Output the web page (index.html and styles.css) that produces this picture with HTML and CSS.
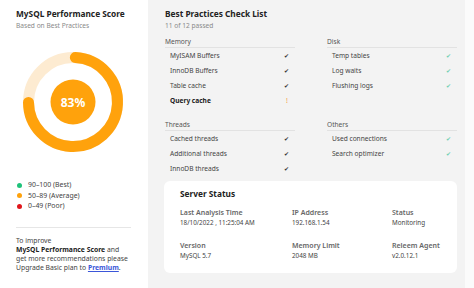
FILE: index.html
```html
<!DOCTYPE html>
<html lang="en">
<head>
    <meta charset="UTF-8">
    <meta name="viewport" content="width=device-width, initial-scale=1.0">
    <title>MySQL Performance</title>
    <link rel="stylesheet" href="styles.css">
</head>
<body>
    <div class="page">
        <div class="score-panel">
            <h1>MySQL Performance Score</h1>
            <p class="subtitle">Based on Best Practices</p>

            <svg class="donut" width="110" height="110" viewBox="0 0 110 110">
                <circle cx="55" cy="55" r="44.5" fill="none" stroke="#fdebd1" stroke-width="11"/>
                <circle cx="55" cy="55" r="44.5" fill="none" stroke="#ffa20c" stroke-width="11"
                        stroke-linecap="round" stroke-dasharray="206.6 300" transform="rotate(-87 55 55)"/>
                <circle cx="55" cy="55" r="22.5" fill="#ffa20c"/>
                <text x="55" y="59.5" text-anchor="middle" class="donut-label">83%</text>
            </svg>

            <ul class="legend">
                <li><span class="dot best"></span>90–100 (Best)</li>
                <li><span class="dot average"></span>50–89 (Average)</li>
                <li><span class="dot poor"></span>0–49 (Poor)</li>
            </ul>

            <hr class="divider">

            <p class="upgrade">
                To improve<br>
                <b>MySQL Performance Score</b> and<br>
                get more recommendations please<br>
                Upgrade Basic plan to <a href="#">Premium</a>.
            </p>
        </div>

        <div class="check-panel">
            <h2>Best Practices Check List</h2>
            <p class="subtitle">11 of 12 passed</p>

            <div class="check-grid">
                <div class="group">
                    <div class="group-title">Memory</div>
                    <div class="item">MyISAM Buffers <span class="ok">✔</span></div>
                    <div class="item">InnoDB Buffers <span class="ok">✔</span></div>
                    <div class="item">Table cache <span class="ok">✔</span></div>
                    <div class="item fail">Query cache <span class="warn">!</span></div>
                </div>
                <div class="group">
                    <div class="group-title">Disk</div>
                    <div class="item">Temp tables <span class="ok teal">✔</span></div>
                    <div class="item">Log waits <span class="ok teal">✔</span></div>
                    <div class="item">Flushing logs <span class="ok teal">✔</span></div>
                </div>
                <div class="group">
                    <div class="group-title">Threads</div>
                    <div class="item">Cached threads <span class="ok">✔</span></div>
                    <div class="item">Additional threads <span class="ok">✔</span></div>
                    <div class="item">InnoDB threads <span class="ok">✔</span></div>
                </div>
                <div class="group">
                    <div class="group-title">Others</div>
                    <div class="item">Used connections <span class="ok teal">✔</span></div>
                    <div class="item">Search optimizer <span class="ok teal">✔</span></div>
                </div>
            </div>

            <div class="status-card">
                <h3>Server Status</h3>
                <div class="status-grid">
                    <div>
                        <div class="label">Last Analysis Time</div>
                        <div class="value">18/10/2022 , 11:25:04 AM</div>
                    </div>
                    <div>
                        <div class="label">IP Address</div>
                        <div class="value">192.168.1.54</div>
                    </div>
                    <div>
                        <div class="label">Status</div>
                        <div class="value">Monitoring</div>
                    </div>
                    <div>
                        <div class="label">Version</div>
                        <div class="value">MySQL 5.7</div>
                    </div>
                    <div>
                        <div class="label">Memory Limit</div>
                        <div class="value">2048 MB</div>
                    </div>
                    <div>
                        <div class="label">Releem Agent</div>
                        <div class="value">v2.0.12.1</div>
                    </div>
                </div>
            </div>
        </div>
    </div>
</body>
</html>
```

FILE: styles.css
```css
* {
    margin: 0;
    padding: 0;
    box-sizing: border-box;
}

body {
    font-family: "Noto Sans", "Open Sans", sans-serif;
    background: #fbfbfb;
    color: #333;
    width: 474px;
    height: 288px;
    overflow: hidden;
}

.page {
    display: flex;
    height: 288px;
}

/* left: score */
.score-panel {
    width: 148px;
    background: white;
    padding: 8px 0 0 16px;
    display: flex;
    flex-direction: column;
}

h1, h2 {
    font-size: 8.3px;
    line-height: 12px;
    font-weight: 700;
    color: #222;
}

.subtitle {
    font-size: 6.6px;
    line-height: 10px;
    color: #8a8a8a;
    margin-top: 1px;
}

.donut {
    display: block;
    margin: 16px 0 0 2px;
}

.donut-label {
    fill: white;
    font-size: 12px;
    font-weight: 700;
    font-family: "Noto Sans", sans-serif;
}

.legend {
    list-style: none;
    margin-top: 23px;
}

.legend li {
    display: flex;
    align-items: center;
    font-size: 6.9px;
    line-height: 10.5px;
    color: #444;
}

.dot {
    width: 5px;
    height: 5px;
    border-radius: 50%;
    margin: 0 6px 0 1px;
}

.dot.best { background: #1fc27a; }
.dot.average { background: #ffa20c; }
.dot.poor { background: #e0161b; }

.divider {
    border: none;
    border-top: 1px solid #e6e6e6;
    width: 115px;
    margin-top: 15px;
}

.upgrade {
    font-size: 6.8px;
    line-height: 9px;
    color: #444;
    margin-top: 8px;
}

.upgrade b {
    color: #222;
}

.upgrade a {
    color: #3b56d9;
    font-weight: 700;
}

/* right: check list */
.check-panel {
    width: 317px;
    background: #f3f3f3;
    padding: 8px 8px 0 17px;
}

.check-grid {
    display: grid;
    grid-template-columns: 130px 130px;
    column-gap: 32px;
    row-gap: 12px;
    margin-top: 6px;
}

.group-title {
    font-size: 6.6px;
    line-height: 10px;
    color: #555;
    border-bottom: 1px solid #e2e2e2;
}

.item {
    display: flex;
    justify-content: space-between;
    align-items: center;
    height: 15px;
    padding: 0 6px 0 5px;
    font-size: 6.6px;
    color: #444;
}

.item.fail {
    font-weight: 700;
    color: #222;
}

.ok {
    font-size: 5.5px;
    color: #333;
}

.ok.teal {
    color: #6fcfb0;
}

.warn {
    font-size: 7px;
    color: #f5a04a;
    font-weight: 400;
    padding-right: 1px;
}

.status-card {
    background: white;
    border-radius: 6px;
    width: 293px;
    height: 92px;
    margin: 5px 0 0 -1px;
    padding: 7px 16px 0;
}

h3 {
    font-size: 8.3px;
    line-height: 12px;
    font-weight: 700;
    color: #222;
}

.status-grid {
    display: grid;
    grid-template-columns: 112px 100px 1fr;
    row-gap: 13px;
    margin-top: 8px;
}

.label {
    font-size: 7px;
    line-height: 10px;
    font-weight: 600;
    color: #666;
}

.value {
    font-size: 6.3px;
    line-height: 10px;
    color: #444;
}
```
